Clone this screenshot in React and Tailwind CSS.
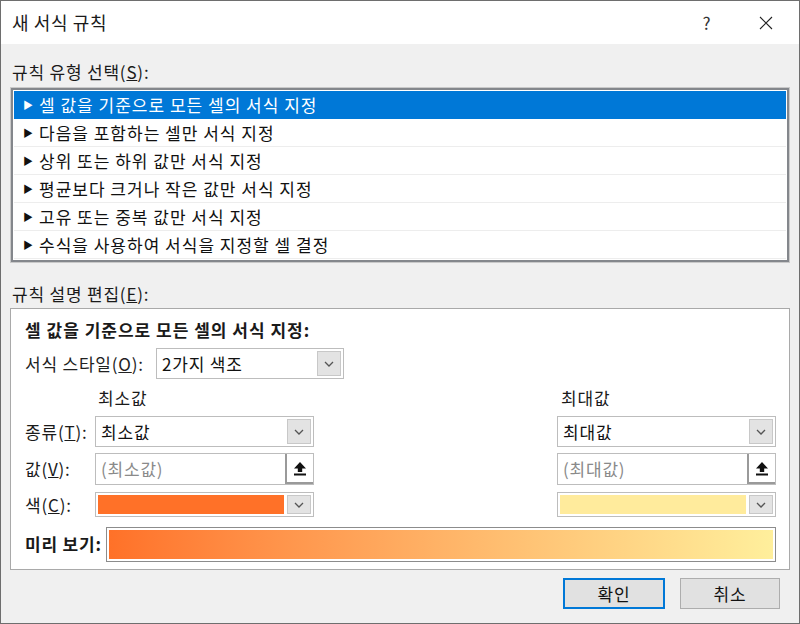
import React from 'react';

const font = { fontFamily: '"Noto Sans CJK KR", "Noto Sans", sans-serif' };

function Chevron() {
  return (
    <svg width="10" height="6" viewBox="0 0 10 6">
      <path d="M1 1 L5 5 L9 1" fill="none" stroke="#555" strokeWidth="1.3" />
    </svg>
  );
}

function DropButton() {
  return (
    <div className="w-[24px] self-stretch m-[2px] ml-0 bg-[#e3e3e3] border border-[#c8c8c8] flex items-center justify-center">
      <Chevron />
    </div>
  );
}

function Select({ text, className = '' }) {
  return (
    <div className={`flex bg-white border border-[#bdbdbd] ${className}`}>
      <div className="flex-1 flex items-center pl-[5px] text-[#111]">{text}</div>
      <DropButton />
    </div>
  );
}

function RefInput({ placeholder }) {
  return (
    <div className="flex w-[219px] h-[32px] bg-white border border-[#bdbdbd]">
      <div className="flex-1 flex items-center pl-[5px] text-[#8a8a8a]">{placeholder}</div>
      <div className="w-[28px] border-l-2 border-[#9a9a9a] border-b-2 bg-white flex items-center justify-center">
        <svg width="14" height="15" viewBox="0 0 14 15">
          <path d="M7 1 L13 7.5 L9.2 7.5 L9.2 11 L4.8 11 L4.8 7.5 L1 7.5 Z" fill="#111" />
          <rect x="1" y="12.5" width="12" height="2" fill="#111" />
        </svg>
      </div>
    </div>
  );
}

function ColorSelect({ color }) {
  return (
    <div className="flex w-[219px] h-[25px] bg-white border border-[#bdbdbd]">
      <div className="flex-1 m-[2px] mr-[3px]" style={{ background: color }} />
      <DropButton />
    </div>
  );
}

function U({ children }) {
  return <span className="underline underline-offset-[1px]">{children}</span>;
}

const rules = [
  '셀 값을 기준으로 모든 셀의 서식 지정',
  '다음을 포함하는 셀만 서식 지정',
  '상위 또는 하위 값만 서식 지정',
  '평균보다 크거나 작은 값만 서식 지정',
  '고유 또는 중복 값만 서식 지정',
  '수식을 사용하여 서식을 지정할 셀 결정',
];

export default function App() {
  return (
    <div
      className="w-[800px] h-[624px] border border-[#6e6e6e] bg-[#f0f0f0] flex flex-col text-[#1a1a1a] text-[17px] tracking-[0.8px]"
      style={font}
    >
      {/* 제목 표시줄 */}
      <div className="h-[43px] bg-white flex items-center pl-[11px] shrink-0">
        <span className="text-[18px] tracking-[0.6px] flex-1">새 서식 규칙</span>
        <span className="text-[17px] text-[#333] w-[20px] text-center mr-[42px]">?</span>
        <svg width="14" height="14" viewBox="0 0 14 14" className="mr-[26px]">
          <path d="M1 1 L13 13 M13 1 L1 13" stroke="#222" strokeWidth="1.1" />
        </svg>
      </div>

      <div className="px-[9px] flex flex-col">
        <div className="mt-[18px] h-[20px] leading-[20px] pl-[2px]">
          규칙 유형 선택(<U>S</U>):
        </div>

        {/* 규칙 목록 */}
        <div className="mt-[6px] ml-[1px] mr-[1px] border-2 border-[#84878c] bg-white p-[1px] outline outline-1 outline-[#c9c9c9]">
          {rules.map((r, i) => (
            <div
              key={r}
              className={`h-[28px] flex items-center pl-[9px] tracking-[1px] border-b ${
                i === 0 ? 'bg-[#0078d7] text-white border-[#0078d7]' : 'border-[#ededed] text-[#111]'
              }`}
            >
              <span className="text-[10px] mr-[5px]">▶</span>
              {r}
            </div>
          ))}
        </div>

        <div className="mt-[22px] h-[20px] leading-[20px] pl-[2px]">
          규칙 설명 편집(<U>E</U>):
        </div>

        {/* 규칙 설명 */}
        <div className="mt-[4px] h-[262px] bg-white border border-[#a9a9a9] pl-[14px] pr-[13px] flex flex-col">
          <div className="mt-[11px] h-[20px] leading-[20px] font-bold tracking-[1px]">
            셀 값을 기준으로 모든 셀의 서식 지정:
          </div>
          <div className="mt-[8px] flex items-center">
            <div className="w-[131px] text-[#222]">서식 스타일(<U>O</U>):</div>
            <Select text="2가지 색조" className="w-[188px] h-[31px]" />
          </div>

          <div className="mt-[10px] flex h-[18px] items-center">
            <div className="w-[73px]" />
            <div className="w-[463px]">최소값</div>
            <div>최대값</div>
          </div>

          <div className="mt-[9px] flex items-center">
            <div className="w-[70px]">종류(<U>T</U>):</div>
            <Select text="최소값" className="w-[219px] h-[31px]" />
            <div className="flex-1" />
            <Select text="최대값" className="w-[219px] h-[31px]" />
          </div>

          <div className="mt-[6px] flex items-center">
            <div className="w-[70px]">값(<U>V</U>):</div>
            <RefInput placeholder="(최소값)" />
            <div className="flex-1" />
            <RefInput placeholder="(최대값)" />
          </div>

          <div className="mt-[7px] flex items-center">
            <div className="w-[70px]">색(<U>C</U>):</div>
            <ColorSelect color="#ff7128" />
            <div className="flex-1" />
            <ColorSelect color="#ffeb9c" />
          </div>

          <div className="mt-[9px] flex items-center">
            <div className="w-[81px] font-bold whitespace-nowrap">미리 보기:</div>
            <div className="flex-1 h-[35px] border border-[#8c8c8c] bg-white p-[2px]">
              <div className="w-full h-full bg-gradient-to-r from-[#ff7128] to-[#ffef9c]" />
            </div>
          </div>
        </div>

        {/* 버튼 */}
        <div className="mt-[8px] flex justify-end gap-[15px] pr-[10px]">
          <button className="w-[102px] h-[31px] bg-[#e1e1e1] border-2 border-[#0078d7] text-[#111]">
            확인
          </button>
          <button className="w-[100px] h-[31px] bg-[#e1e1e1] border border-[#adadad] text-[#111]">
            취소
          </button>
        </div>
      </div>
    </div>
  );
}
